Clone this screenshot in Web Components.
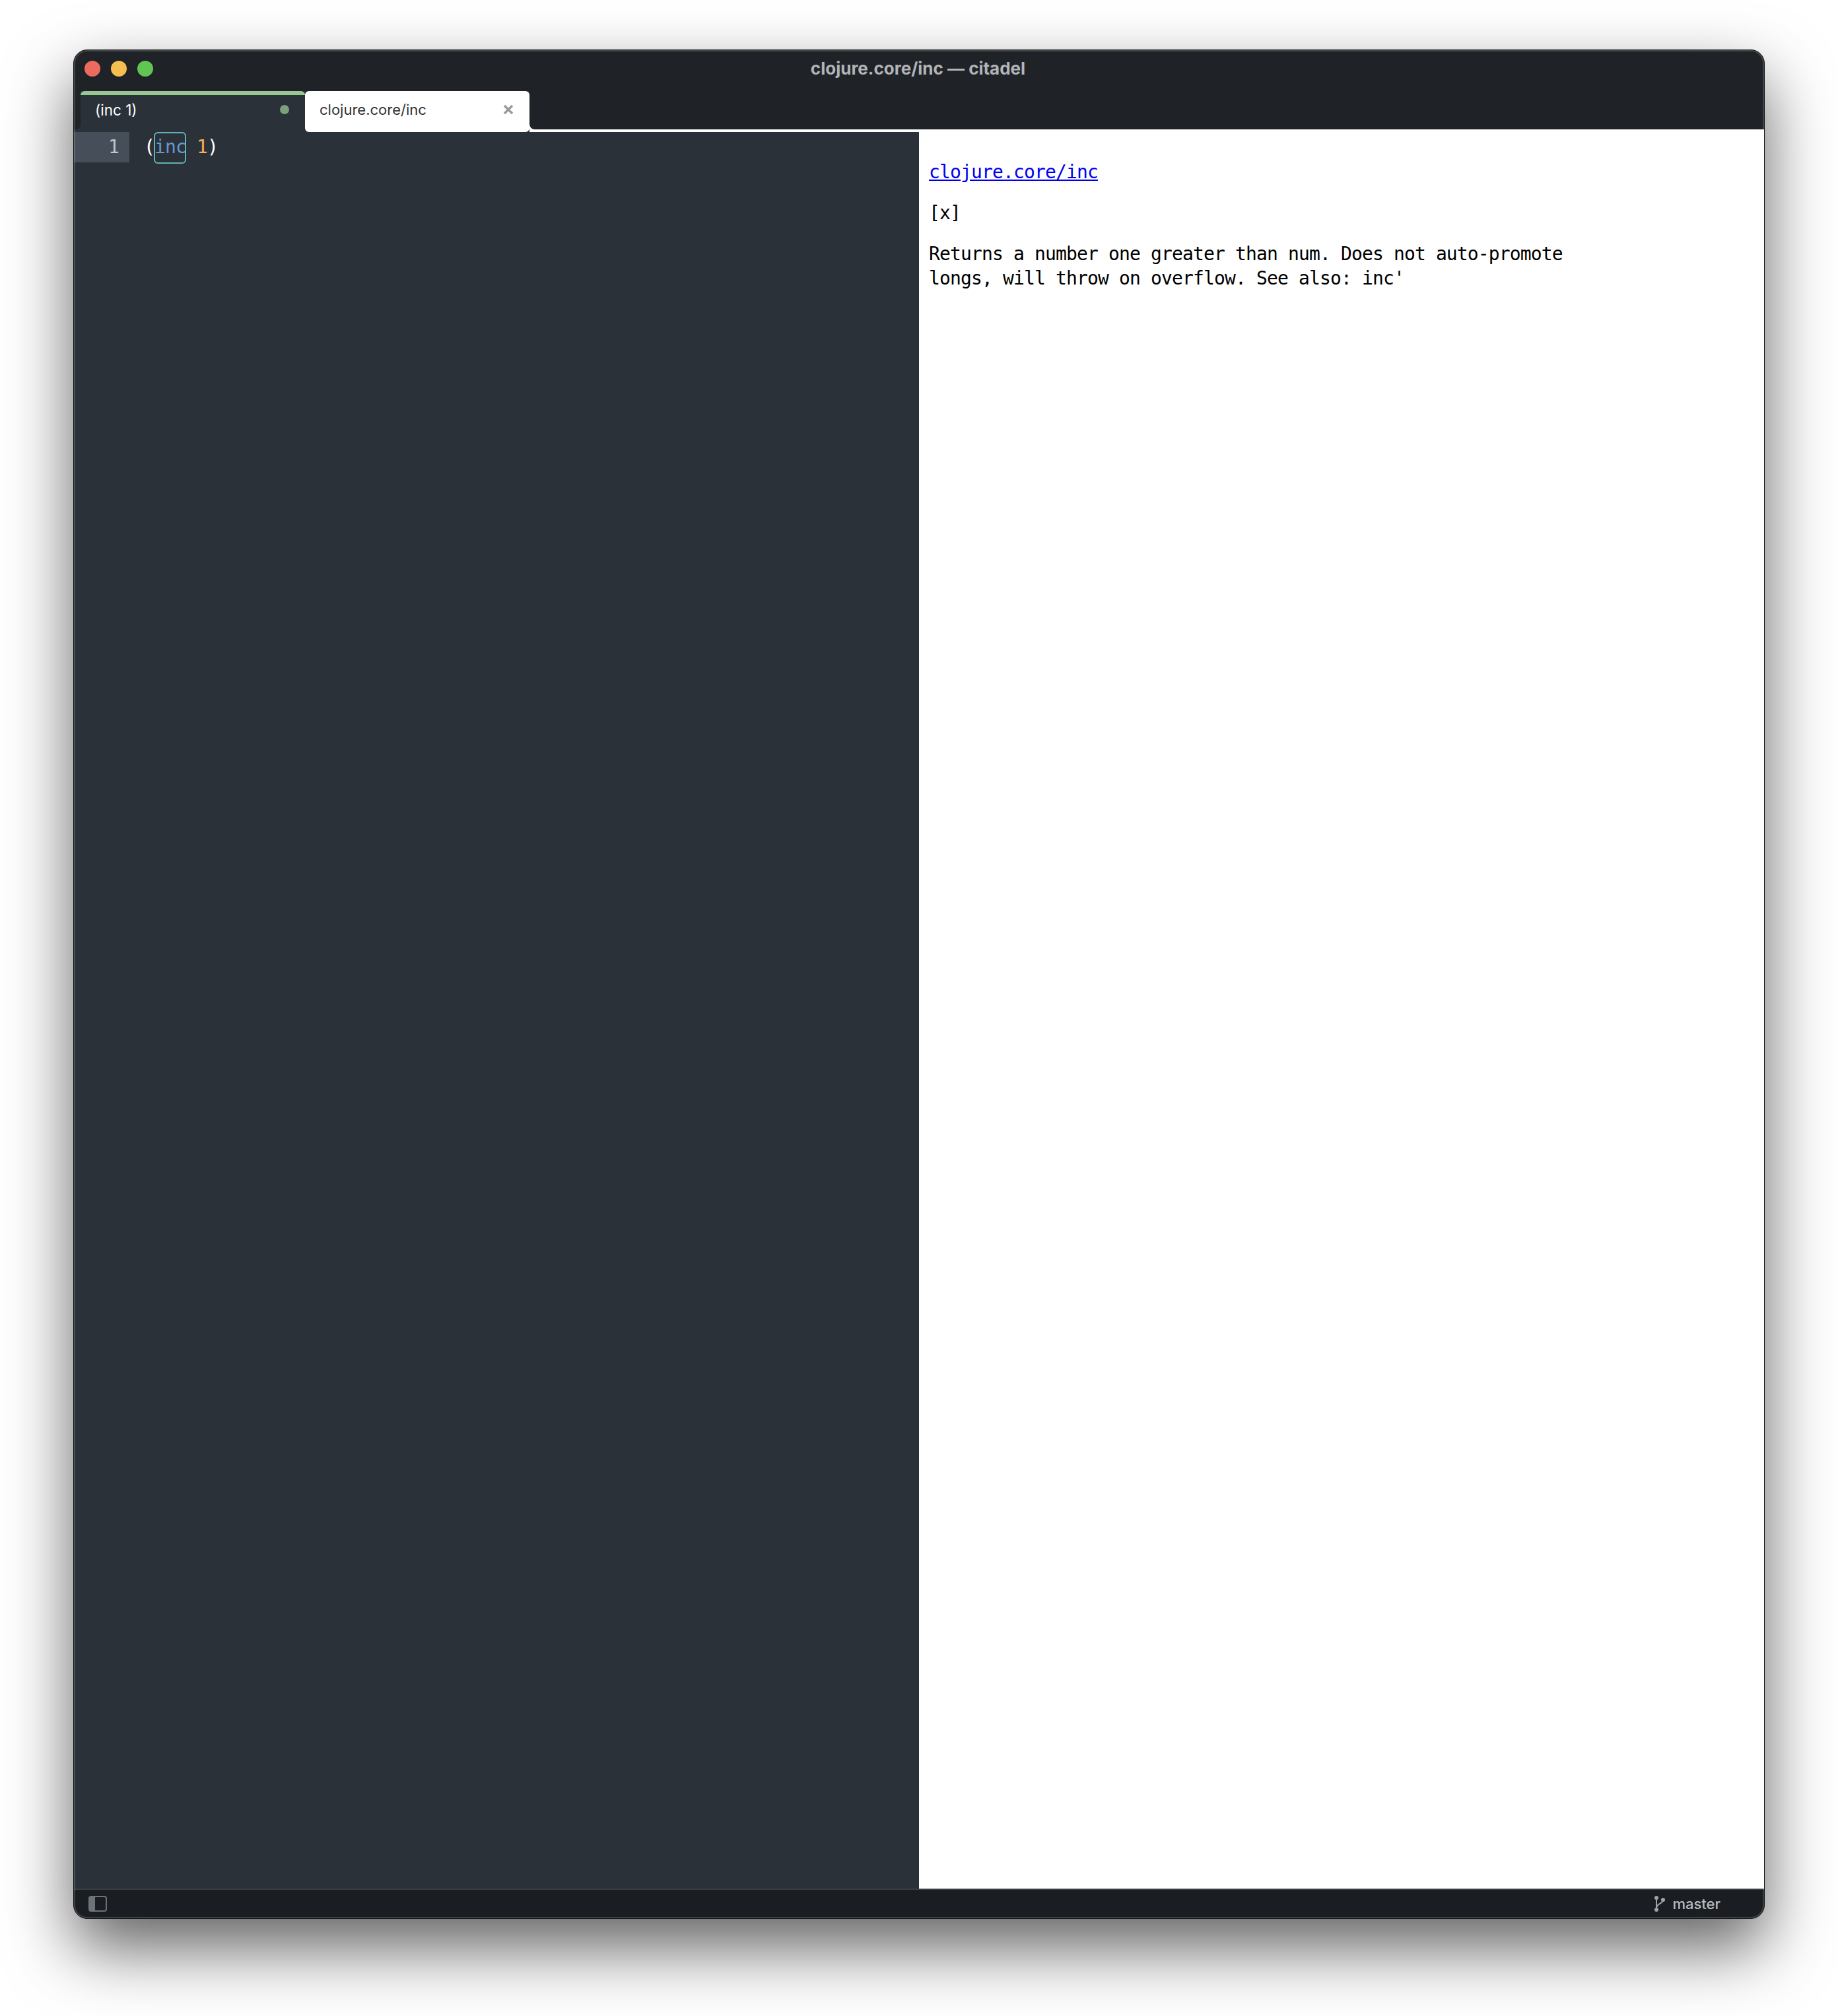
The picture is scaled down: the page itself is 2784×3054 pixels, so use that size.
<!DOCTYPE html>
<html>
<head>
<meta charset="utf-8">
<title>clojure.core/inc — citadel</title>
<style>
  html, body { margin: 0; background: #fff; }
  body { box-sizing: border-box; width: 2784px; height: 3054px; padding: 75px 111px 147px; display: flex; font-family: Inter, "Liberation Sans", sans-serif; }
</style>
</head>
<body>
<app-window>
  <title-bar>clojure.core/inc — citadel</title-bar>
  <tab-bar>
    <doc-tab active dirty>(inc 1)</doc-tab>
    <doc-tab closable>clojure.core/inc</doc-tab>
  </tab-bar>
  <split-view>
    <code-editor></code-editor>
    <doc-panel>
      <p><a href="#inc">clojure.core/inc</a></p>
      <p>[x]</p>
      <p>Returns a number one greater than num. Does not auto-promote<br>longs, will throw on overflow. See also: inc'</p>
    </doc-panel>
  </split-view>
  <status-bar>master</status-bar>
</app-window>

<script>
const define = (name, template) => customElements.define(name, class extends HTMLElement {
  constructor() {
    super()
    this.attachShadow({mode: 'open'})
    this.shadowRoot.innerHTML = template
  }
})

define('app-window', `
  <style>
    :host {
      flex: 1;
      position: relative;
      display: flex;
      border-radius: 21px;
      box-shadow: 0 44px 100px rgba(0, 0, 0, .62);
    }
    .frame {
      flex: 1;
      min-width: 0;
      display: flex;
      flex-direction: column;
      box-sizing: border-box;
      border: 1px solid #0e0f11;
      border-radius: 21px;
      overflow: hidden;
      background: #1f2327;
    }
    .rim {
      position: absolute;
      inset: 1px;
      border-radius: 20px;
      box-shadow: inset 0 0 0 2px rgba(255, 255, 255, .16);
      pointer-events: none;
    }
  </style>
  <div class="frame"><slot></slot></div>
  <div class="rim"></div>
`)

define('title-bar', `
  <style>
    :host {
      position: relative;
      flex: none;
      height: 62px;
      display: flex;
      align-items: center;
      justify-content: center;
      padding: 0 3px 8px 0;
      box-sizing: border-box;
      color: #b3b4b7;
      font-size: 26px;
      font-weight: 700;
      background: #1f2327;
    }
    .lights {
      position: absolute;
      left: 16px;
      top: 16px;
      display: flex;
      gap: 16px;
    }
    .lights i { width: 24px; height: 24px; border-radius: 50%; }
  </style>
  <div class="lights">
    <i style="background:#ed6a5e"></i>
    <i style="background:#f4bf4f"></i>
    <i style="background:#61c554"></i>
  </div>
  <slot></slot>
`)

define('tab-bar', `
  <style>
    :host {
      flex: none;
      height: 62px;
      display: flex;
      background: #2b3139;
    }
    .gap { flex: none; width: 10px; background: #2b3139; }
    .gap::before, .rest::before {
      content: '';
      display: block;
      height: 58px;
      background: #1f2327;
    }
    .gap::before { border-bottom-right-radius: 8px; }
    .rest { flex: 1; background: #fff; }
    .rest::before { border-bottom-left-radius: 8px; }
  </style>
  <div class="gap"></div>
  <slot></slot>
  <div class="rest"></div>
`)

customElements.define('doc-tab', class extends HTMLElement {
  constructor() {
    super()
    this.attachShadow({mode: 'open'})
    this.shadowRoot.innerHTML = `
    <style>
      :host {
        flex: none;
        width: 340px;
        box-sizing: border-box;
        display: flex;
        align-items: center;
        justify-content: space-between;
        padding: 0 24px 6px 22px;
        font-size: 22px;
        color: #333;
        background: #fff;
        border-radius: 6px;
      }
      :host([active]) {
        color: #fff;
        background: #2b3139;
        border-top: 6px solid #99c794;
        border-radius: 6px 6px 0 0;
        padding-bottom: 12px;
        font-size: 22.5px;
      }
      .dot { width: 14px; height: 14px; border-radius: 50%; background: #7ba07c; }
      svg { width: 16px; height: 16px; }
    </style>
    <slot></slot>
    ${this.hasAttribute('dirty') ? '<span class="dot"></span>' : ''}
    ${this.hasAttribute('closable') ? `<svg viewBox="0 0 16 16"><path d="M2 2 14 14M14 2 2 14" stroke="#999" stroke-width="3.4" fill="none"/></svg>` : ''}
    `
  }
})

define('split-view', `
  <style>
    :host {
      flex: 1;
      min-height: 0;
      display: grid;
      grid-template-columns: 1280px 1fr;
    }
  </style>
  <slot></slot>
`)

define('code-editor', `
  <style>
    :host {
      display: block;
      background: #2b3139;
      font: 28px/46px "DejaVu Sans Mono", monospace;
      letter-spacing: -.86px;
      color: #d8dee9;
    }
    .line { display: flex; height: 46px; }
    .gutter {
      flex: none;
      width: 84px;
      box-sizing: border-box;
      padding-right: 16px;
      text-align: right;
      color: #c0c5ce;
      background: #454e59;
    }
    .code { padding-left: 22px; white-space: pre; color: #fff; }
    .fn { position: relative; color: #6699cc; }
    .fn::after {
      content: '';
      position: absolute;
      left: -1px;
      right: 0;
      top: -6px;
      height: 44px;
      border: 2px solid #5fb3b3;
      border-radius: 6px;
    }
    .num { color: #f9ae58; }
  </style>
  <div class="line">
    <div class="gutter">1</div>
    <div class="code">(<span class="fn">inc</span> <span class="num">1</span>)</div>
  </div>
`)

define('doc-panel', `
  <style>
    :host {
      display: block;
      padding: 17px 16px 16px 15px;
      background: #fff;
      color: #000;
      font: 28px/37px "DejaVu Sans Mono", monospace;
      letter-spacing: -.86px;
    }
    ::slotted(p) { margin: 25px 0; }
    ::slotted(:last-child) { margin-bottom: 0; }
  </style>
  <slot></slot>
`)

define('status-bar', `
  <style>
    :host {
      flex: none;
      height: 45px;
      box-sizing: border-box;
      display: flex;
      align-items: center;
      padding: 0 66px 2px 22px;
      border-top: 2px solid #3a3f44;
      background: #1a1d21;
      color: #b8bbc0;
      font-size: 22px;
      font-weight: 500;
    }
    .side { width: 28px; height: 24px; display: block; }
    .spring { flex: 1; }
    .branch { width: 18px; height: 24px; display: block; margin-right: 10px; }
  </style>
  <svg class="side" viewBox="0 0 28 24">
    <rect x="1" y="1" width="26" height="22" rx="3" fill="none" stroke="#6d7478" stroke-width="2"/>
    <path d="M4 1H10V23H4A3 3 0 0 1 1 20V4A3 3 0 0 1 4 1Z" fill="#6d7478"/>
  </svg>
  <span class="spring"></span>
  <svg class="branch" viewBox="0 0 18 24">
    <circle cx="4" cy="3" r="3" fill="#a0a3a8"/>
    <circle cx="4" cy="21" r="3" fill="#a0a3a8"/>
    <circle cx="14" cy="6" r="3" fill="#a0a3a8"/>
    <path d="M4 3V21M14 6C14 12 5 11 4 18" fill="none" stroke="#a0a3a8" stroke-width="2"/>
  </svg>
  <slot></slot>
`)
</script>
</body>
</html>
